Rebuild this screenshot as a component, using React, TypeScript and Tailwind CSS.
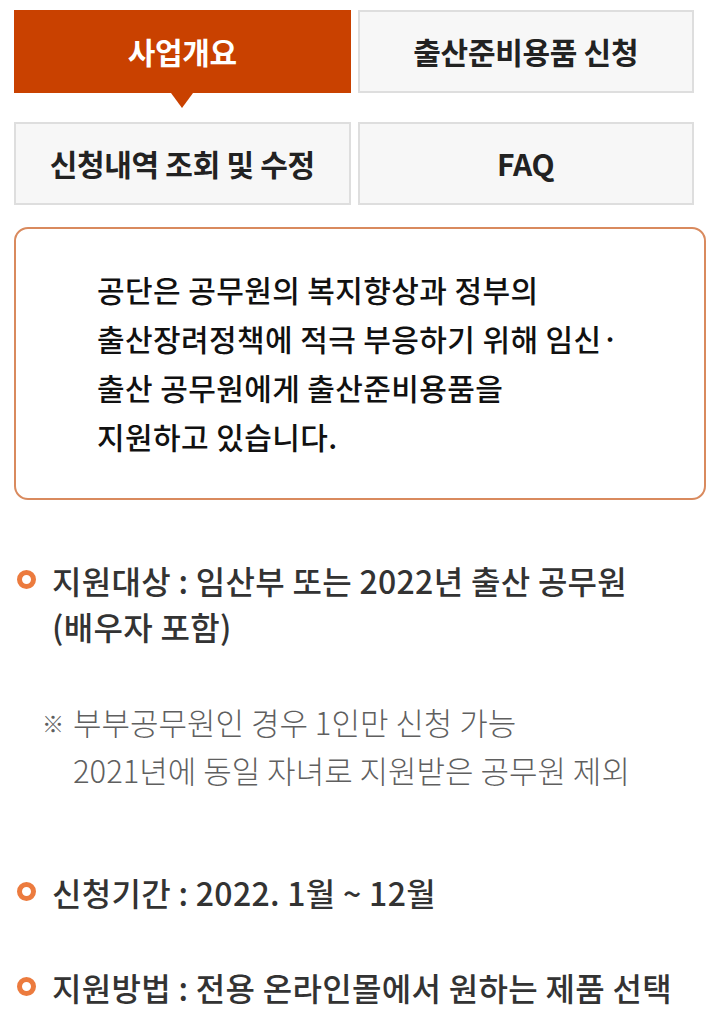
const font = { fontFamily: '"Noto Sans CJK KR", "Noto Sans", sans-serif' };

const tabs = [
  { label: '사업개요', active: true },
  { label: '출산준비용품 신청', active: false },
  { label: '신청내역 조회 및 수정', active: false },
  { label: 'FAQ', active: false },
];

function Ring() {
  return (
    <span className="mt-[13px] ml-[3px] mr-[16px] block h-[19px] w-[19px] shrink-0 rounded-full border-[5px] border-[#ec7b3e]" />
  );
}

export default function App() {
  return (
    <div className="min-h-[1024px] bg-white px-[14px] pt-[10px]" style={font}>
      <div className="grid w-[680px] grid-cols-2 gap-x-[7px] gap-y-[29px]">
        {tabs.map((tab) =>
          tab.active ? (
            <div
              key={tab.label}
              className="relative flex h-[83px] items-center justify-center bg-[#c94100] text-[30px] font-bold tracking-[-0.3px] text-white"
            >
              {tab.label}
              <span className="absolute left-1/2 top-full -translate-x-1/2 border-x-[11px] border-t-[15px] border-x-transparent border-t-[#c94100]" />
            </div>
          ) : (
            <div
              key={tab.label}
              className="flex h-[83px] items-center justify-center border-2 border-[#dedede] bg-[#f7f7f7] text-[30px] font-bold tracking-[-0.3px] text-[#222]"
            >
              {tab.label}
            </div>
          )
        )}
      </div>

      <div className="mt-[22px] w-[692px] rounded-[14px] border-2 border-[#d98a5e] pb-[37px] pl-[81px] pt-[36px] text-[30px] font-medium leading-[49px] tracking-[0.4px] text-[#111]">
        공단은 공무원의 복지향상과 정부의
        <br />
        출산장려정책에 적극 부응하기 위해 임신·
        <br />
        출산 공무원에게 출산준비용품을
        <br />
        지원하고 있습니다.
      </div>

      <div className="mt-[57px] flex text-[32px] font-medium leading-[46px] tracking-[0.3px] text-[#333]">
        <Ring />
        <p>
          지원대상 : 임산부 또는 2022년 출산 공무원
          <br />
          (배우자 포함)
        </p>
      </div>

      <div className="mt-[49px] flex text-[31px] font-light leading-[48px] text-[#5f5f5f]">
        <span className="ml-[28px] w-[31px] shrink-0 text-[22px]">※</span>
        <p>
          부부공무원인 경우 1인만 신청 가능
          <br />
          2021년에 동일 자녀로 지원받은 공무원 제외
        </p>
      </div>

      <div className="mt-[75px] flex text-[32px] font-medium leading-[46px] tracking-[0.3px] text-[#333]">
        <Ring />
        <p>신청기간 : 2022. 1월 ~ 12월</p>
      </div>

      <div className="mt-[49px] flex text-[32px] font-medium leading-[46px] tracking-[0.3px] text-[#333]">
        <Ring />
        <p>지원방법 : 전용 온라인몰에서 원하는 제품 선택</p>
      </div>
    </div>
  );
}
